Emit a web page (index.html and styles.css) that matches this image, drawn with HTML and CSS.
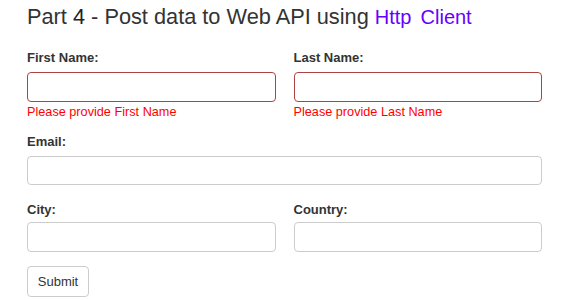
FILE: index.html
```html
<!DOCTYPE html>
<html>
<head>
<meta charset="utf-8">
<link rel="stylesheet" href="styles.css">
</head>
<body>
<div class="page">
  <h1 class="title">Part <span class="num">4</span> - Post data to Web API using <span class="brand">Http</span> <span class="brand">Client</span></h1>
  <form class="form">
    <div class="row two first">
      <div class="group">
        <label class="lbl">First Name:</label>
        <input class="ctl invalid" type="text">
        <div class="err">Please provide First Name</div>
      </div>
      <div class="group">
        <label class="lbl">Last Name:</label>
        <input class="ctl invalid" type="text">
        <div class="err">Please provide Last Name</div>
      </div>
    </div>
    <div class="row email">
      <div class="group">
        <label class="lbl">Email:</label>
        <input class="ctl short" type="text">
      </div>
    </div>
    <div class="row two place">
      <div class="group">
        <label class="lbl">City:</label>
        <input class="ctl" type="text">
      </div>
      <div class="group">
        <label class="lbl">Country:</label>
        <input class="ctl" type="text">
      </div>
    </div>
    <div class="row actions">
      <button class="btn" type="button">Submit</button>
    </div>
  </form>
</div>
</body>
</html>
```

FILE: styles.css
```css
* { box-sizing: border-box; }
html, body { margin: 0; padding: 0; background: #fff; }
body {
  font-family: "Liberation Sans", Arial, sans-serif;
  color: #333;
  font-size: 13px;
}
.page {
  padding: 0 30px 0 27px;
  width: 572px;
}
.title {
  margin: 0;
  padding-top: 2px;
  font-size: 21.75px;
  font-weight: normal;
  line-height: 30px;
  color: #333;
}
.num { color: #222; }
.brand { color: #6600ff; font-size: 20px; }
.brand + .brand { margin-left: 3px; }
.form {
  margin-top: 17px;
  display: flex;
  flex-direction: column;
}
.row { display: grid; grid-template-columns: 1fr; }
.row.two { grid-template-columns: 1fr 1fr; column-gap: 18px; }
.row.email { margin-top: 13px; }
.row.place { margin-top: 16px; }
.row.actions { margin-top: 14px; }
.group { display: flex; flex-direction: column; }
.lbl {
  font-weight: bold;
  font-size: 13px;
  line-height: 18px;
  margin-bottom: 5px;
}
.place .lbl { margin-bottom: 3px; }
.ctl {
  height: 30px;
  border: 1px solid #ccc;
  border-radius: 4px;
  background: #fff;
  font: inherit;
  padding: 4px 8px;
  width: 100%;
}
.ctl.short { height: 29px; }
.ctl.invalid { border-color: #a94442; }
.err {
  color: #ff0000;
  font-size: 12.7px;
  line-height: 16px;
  margin-top: 2px;
}
.btn {
  justify-self: start;
  width: 62px;
  height: 31px;
  border: 1px solid #ccc;
  border-radius: 4px;
  background: #fff;
  color: #333;
  font-family: "Liberation Sans", Arial, sans-serif;
  font-size: 13px;
  padding: 0;
}
```
